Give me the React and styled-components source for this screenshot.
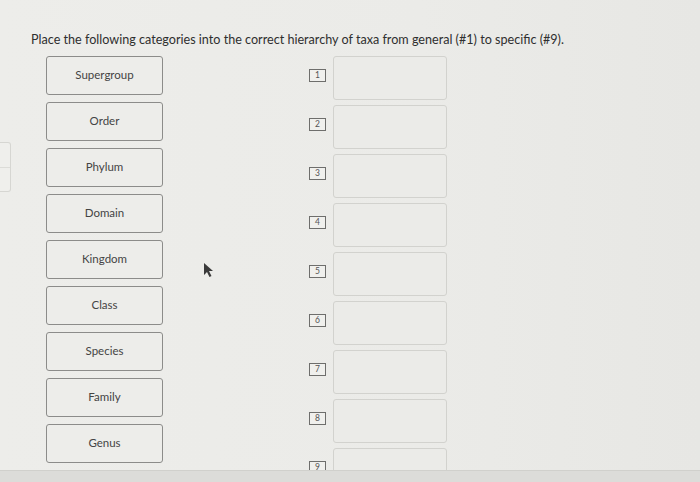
import styled, { createGlobalStyle } from 'styled-components';

const GlobalStyle = createGlobalStyle`
  html, body {
    margin: 0;
    padding: 0;
    background: #dcdcd9;
  }
  body {
    font-family: Lato, "Open Sans", "Liberation Sans", sans-serif;
    color: #333;
  }
`;

const Screen = styled.div`
  width: 700px;
  height: 482px;
  overflow: hidden;
  display: flex;
  flex-direction: column;
  position: relative;
`;

const Viewport = styled.div`
  height: 470px;
  overflow: hidden;
  display: flex;
  background: linear-gradient(90deg, #ededea 0%, #ebebe8 60%, #e7e7e4 100%);
  border-bottom: 1px solid #d0d0cc;
`;

const Side = styled.aside`
  width: 10px;
  padding-top: 142px;
`;

const SideTab = styled.div`
  width: 10px;
  height: 48px;
  border: 1px solid #d6d6d2;
  border-left: none;
  border-radius: 0 3px 3px 0;
  background: #efefec;
  display: flex;
  flex-direction: column;
  div {
    flex: 1;
  }
  div + div {
    border-top: 1px solid #dcdcd8;
  }
`;

const Main = styled.main`
  flex: 1;
  padding: 32px 0 0 21px;
`;

const Prompt = styled.p`
  margin: 0 0 8px;
  font-size: 12.6px;
  line-height: 16px;
  color: #2f2f2f;
`;

const Board = styled.div`
  display: flex;
`;

const Choices = styled.div`
  width: 117px;
  margin-left: 15px;
  display: flex;
  flex-direction: column;
  gap: 7px;
`;

const Choice = styled.div`
  height: 39px;
  box-sizing: border-box;
  border: 1px solid #8c8c8a;
  border-radius: 3px;
  background: #ededea;
  display: flex;
  align-items: center;
  justify-content: center;
  padding-bottom: 3px;
  font-size: 11.5px;
  color: #444;
`;

const Slots = styled.div`
  margin-left: 146px;
  display: flex;
  flex-direction: column;
  gap: 5px;
`;

const SlotRow = styled.div`
  display: flex;
  align-items: center;
  gap: 7px;
`;

const SlotNumber = styled.span`
  width: 17px;
  height: 13px;
  box-sizing: border-box;
  border: 1px solid #6e6e6c;
  background: #f0f0ed;
  font-size: 8.5px;
  line-height: 11px;
  text-align: center;
  color: #555;
  margin-top: -6px;
`;

const DropZone = styled.div`
  width: 114px;
  height: 44px;
  box-sizing: border-box;
  border: 1px solid #d2d2ce;
  border-radius: 3px;
  background: #ebebe8;
`;

const Cursor = styled.svg`
  position: absolute;
  left: 202px;
  top: 262px;
`;

const choices = ['Supergroup', 'Order', 'Phylum', 'Domain', 'Kingdom', 'Class', 'Species', 'Family', 'Genus'];

const App = () => {
  return (
    <>
      <GlobalStyle />
      <Screen>
        <Viewport>
          <Side>
            <SideTab>
              <div />
              <div />
            </SideTab>
          </Side>
          <Main>
            <Prompt>
              Place the following categories into the correct hierarchy of taxa from general (#1) to specific (#9).
            </Prompt>
            <Board>
              <Choices>
                {choices.map((c) => (
                  <Choice key={c}>{c}</Choice>
                ))}
              </Choices>
              <Slots>
                {choices.map((c, i) => (
                  <SlotRow key={c}>
                    <SlotNumber>{i + 1}</SlotNumber>
                    <DropZone />
                  </SlotRow>
                ))}
              </Slots>
            </Board>
          </Main>
        </Viewport>
        <Cursor width="14" height="16" viewBox="0 0 14 16">
          <path d="M2 1 L2 13 L5 10 L7.5 15 L9.5 14 L7 9 L11 9 Z" fill="#3a3a3a" />
        </Cursor>
      </Screen>
    </>
  );
};

export default App;
